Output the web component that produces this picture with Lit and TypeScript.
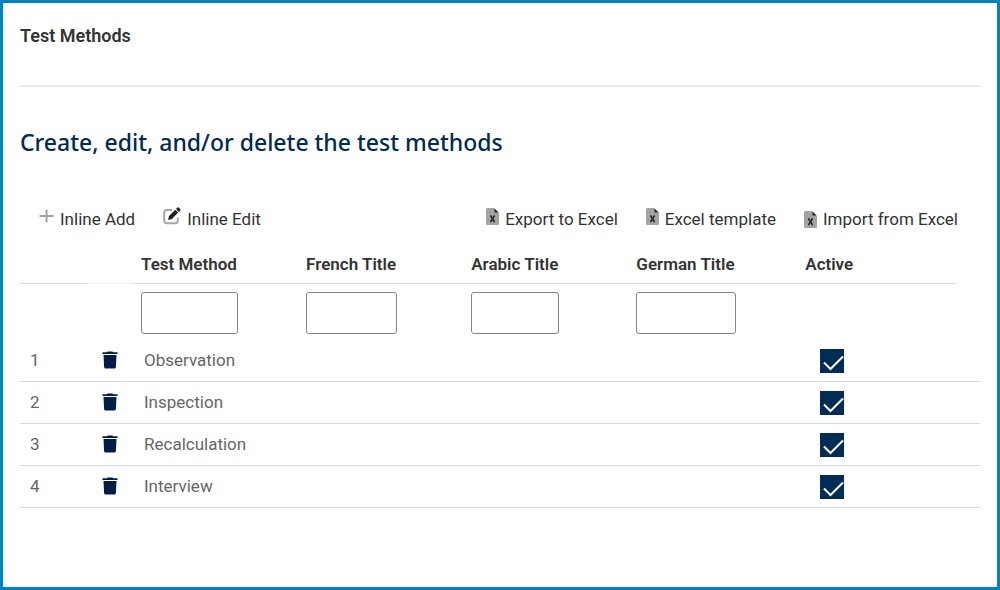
import { LitElement, html, svg, css } from "lit";
import { customElement, state } from "lit/decorators.js";
import { styleMap } from "lit/directives/style-map.js";

interface Method {
  id: number;
  name: string;
  active: boolean;
}

const plusIcon = html`<svg class="icon raised" width="15" height="14" viewBox="0 0 15 14" aria-hidden="true">
  <path d="M7.5 0.5v13M0.5 7h14" stroke="#a3a3a3" stroke-width="2" fill="none" />
</svg>`;

const editIcon = html`<svg class="icon raised" width="18" height="18" viewBox="0 0 18 18" aria-hidden="true">
  <path d="M9 3H3.6A2.4 2.4 0 0 0 1.2 5.400v8.400A2.400 2.400 0 0 0 3.600 16.200h8.800A2.400 2.400 0 0 0 14.800 13.800V10.500" fill="none" stroke="#a6a6a6" stroke-width="2" />
  <path d="M5 13l1-4 6.300-6.300 2.900 2.900L8.900 12z" fill="#222" />
  <path d="M13 2l1.200-1.200a1.300 1.300 0 0 1 1.800 0l1.100 1.100a1.300 1.300 0 0 1 0 1.800L15.900 4.900z" fill="#222" />
</svg>`;

const sheetShape = svg`
  <path d="M1.500 0H8l5 5v10.500a1.500 1.500 0 0 1-1.500 1.500h-10A1.500 1.500 0 0 1 0 15.500v-14A1.500 1.500 0 0 1 1.500 0z" fill="#a3a3a3" />
  <path d="M8.500 0.500L12.500 4.500H8.500z" fill="#222" />
  <path d="M4 8h1.500M7.500 8H9M4 13.500h1.500M7.500 13.500H9M4.800 8l3.500 5.500M8.300 8l-3.500 5.500" fill="none" stroke="#222" stroke-width="1.400" />`;

const sheetIcon = (raised: boolean) => html`<svg class="icon ${raised ? "raised" : ""}" width="13" height="17" viewBox="0 0 13 17" aria-hidden="true">${sheetShape}</svg>`;

const trashIcon = html`<svg class="trash-icon" width="16" height="18" viewBox="0 0 16 18" aria-hidden="true">
  <path d="M0.500 1.200H4.800L5.600 0.400h4.800l0.800 0.800H15.500V3H0.500z" fill="#001d48" />
  <path d="M1.500 4h13L13.900 16a1.600 1.600 0 0 1-1.600 1.500H3.700A1.600 1.600 0 0 1 2.100 16z" fill="#001d48" />
</svg>`;

@customElement("app-root")
export class AppRoot extends LitElement {
  @state() private methods: Method[] = [
    { id: 1, name: "Observation", active: true },
    { id: 2, name: "Inspection", active: true },
    { id: 3, name: "Recalculation", active: true },
    { id: 4, name: "Interview", active: true },
  ];

  private filters = [
    { title: "Test Method", width: 97 },
    { title: "French Title", width: 91 },
    { title: "Arabic Title", width: 88 },
    { title: "German Title", width: 100 },
  ];

  static styles = css`
    :host {
      display: block;
      box-sizing: border-box;
      min-height: 100vh;
      border: 3px solid #0082c3;
      padding: 20px 17px;
      background: #fff;
      color: #333;
      font: 17px/24px Roboto, sans-serif;
    }
    * {
      box-sizing: border-box;
    }
    .page-title {
      margin: 0;
      padding: 1px 0 37px;
      border-bottom: 2px solid #ebebeb;
      font-size: 18px;
      line-height: 24px;
      font-weight: 600;
    }
    .section-title {
      margin: 39px 0 0;
      font: 500 23px/32px "Noto Sans", sans-serif;
      color: #002b54;
    }
    .toolbar {
      display: flex;
      justify-content: space-between;
      margin: 48px 22px 0 19px;
    }
    .group {
      display: flex;
      gap: 28px;
    }
    button {
      border: 0;
      padding: 0;
      background: none;
      color: inherit;
      font: inherit;
      cursor: pointer;
    }
    .tool {
      display: flex;
      align-items: center;
      gap: 6px;
      height: 26px;
    }
    .icon {
      flex: none;
    }
    .raised {
      margin-bottom: 6px;
    }
    table {
      width: 100%;
      margin-top: 12px;
      table-layout: fixed;
      border-collapse: separate;
      border-spacing: 0;
    }
    .col-index {
      width: 67px;
    }
    .col-delete {
      width: 46px;
    }
    .col-text {
      width: 17.2%;
    }
    .col-wide {
      width: 17.6%;
    }
    .col-end {
      width: 23px;
    }
    th,
    td {
      padding: 0 8px;
      text-align: left;
    }
    .head th,
    .head .blank {
      height: 40px;
      border-bottom: 1px solid #dcdcdc;
      font-weight: 600;
    }
    .head .faint {
      border-bottom-color: #efefef;
    }
    .filter-row td {
      height: 56px;
      vertical-align: top;
      padding-top: 8px;
    }
    .filter {
      display: block;
      height: 42px;
      border: 1px solid #858585;
      border-radius: 3px;
      padding: 0 8px;
      background: #fff;
      font: inherit;
    }
    .row td {
      height: 42px;
      padding-bottom: 2px;
      border-bottom: 1px solid #d9d9d9;
      color: #666;
    }
    .row .index {
      padding-left: 10px;
    }
    .row .name {
      padding-left: 11px;
    }
    .row .delete {
      padding-left: 15px;
    }
    .trash,
    .trash-icon {
      display: block;
    }
    .row .active {
      padding-bottom: 0;
      padding-left: 23px;
    }
    .check {
      display: grid;
      width: 24px;
      height: 24px;
    }
    .box,
    .tick {
      grid-area: 1 / 1;
    }
    .box {
      appearance: none;
      width: 24px;
      height: 24px;
      margin: 0;
      border: 1px solid #002d55;
      background: #fff;
    }
    .box:checked {
      background: #002d55;
    }
    .tick {
      pointer-events: none;
    }
  `;

  private remove(id: number) {
    this.methods = this.methods.filter((m) => m.id !== id);
  }

  render() {
    return html`
      <h1 class="page-title">Test Methods</h1>
      <h2 class="section-title">Create, edit, and/or delete the test methods</h2>
      <div class="toolbar">
        <div class="group">
          <button class="tool">${plusIcon}Inline Add</button>
          <button class="tool">${editIcon}Inline Edit</button>
        </div>
        <div class="group">
          <button class="tool">${sheetIcon(true)}Export to Excel</button>
          <button class="tool">${sheetIcon(true)}Excel template</button>
          <button class="tool">${sheetIcon(false)}Import from Excel</button>
        </div>
      </div>
      <table>
        <colgroup>
          <col class="col-index" />
          <col class="col-delete" />
          <col class="col-text" />
          <col class="col-text" />
          <col class="col-text" />
          <col class="col-wide" />
          <col />
          <col class="col-end" />
        </colgroup>
        <thead>
          <tr class="head">
            <td class="blank"></td>
            <td class="blank faint"></td>
            ${this.filters.map((f) => html`<th scope="col">${f.title}</th>`)}
            <th scope="col">Active</th>
            <td></td>
          </tr>
          <tr class="filter-row">
            <td colspan="2"></td>
            ${this.filters.map(
              (f) => html`<td>
                <input class="filter" type="text" aria-label=${f.title} style=${styleMap({ width: `${f.width}px` })} />
              </td>`
            )}
            <td colspan="2"></td>
          </tr>
        </thead>
        <tbody>
          ${this.methods.map(
            (m) => html`<tr class="row">
              <td class="index">${m.id}</td>
              <td class="delete">
                <button class="trash" aria-label="Delete ${m.name}" @click=${() => this.remove(m.id)}>${trashIcon}</button>
              </td>
              <td class="name">${m.name}</td>
              <td></td>
              <td></td>
              <td></td>
              <td class="active" colspan="2">
                <label class="check">
                  <input class="box" type="checkbox" aria-label="${m.name} active" .checked=${m.active} />
                  <svg class="tick" width="24" height="24" viewBox="0 0 24 24" aria-hidden="true">
                    <path d="M4 13.500l6.500 6.500L23 7.500" fill="none" stroke="#fff" stroke-width="2" />
                  </svg>
                </label>
              </td>
            </tr>`
          )}
        </tbody>
      </table>
    `;
  }
}
